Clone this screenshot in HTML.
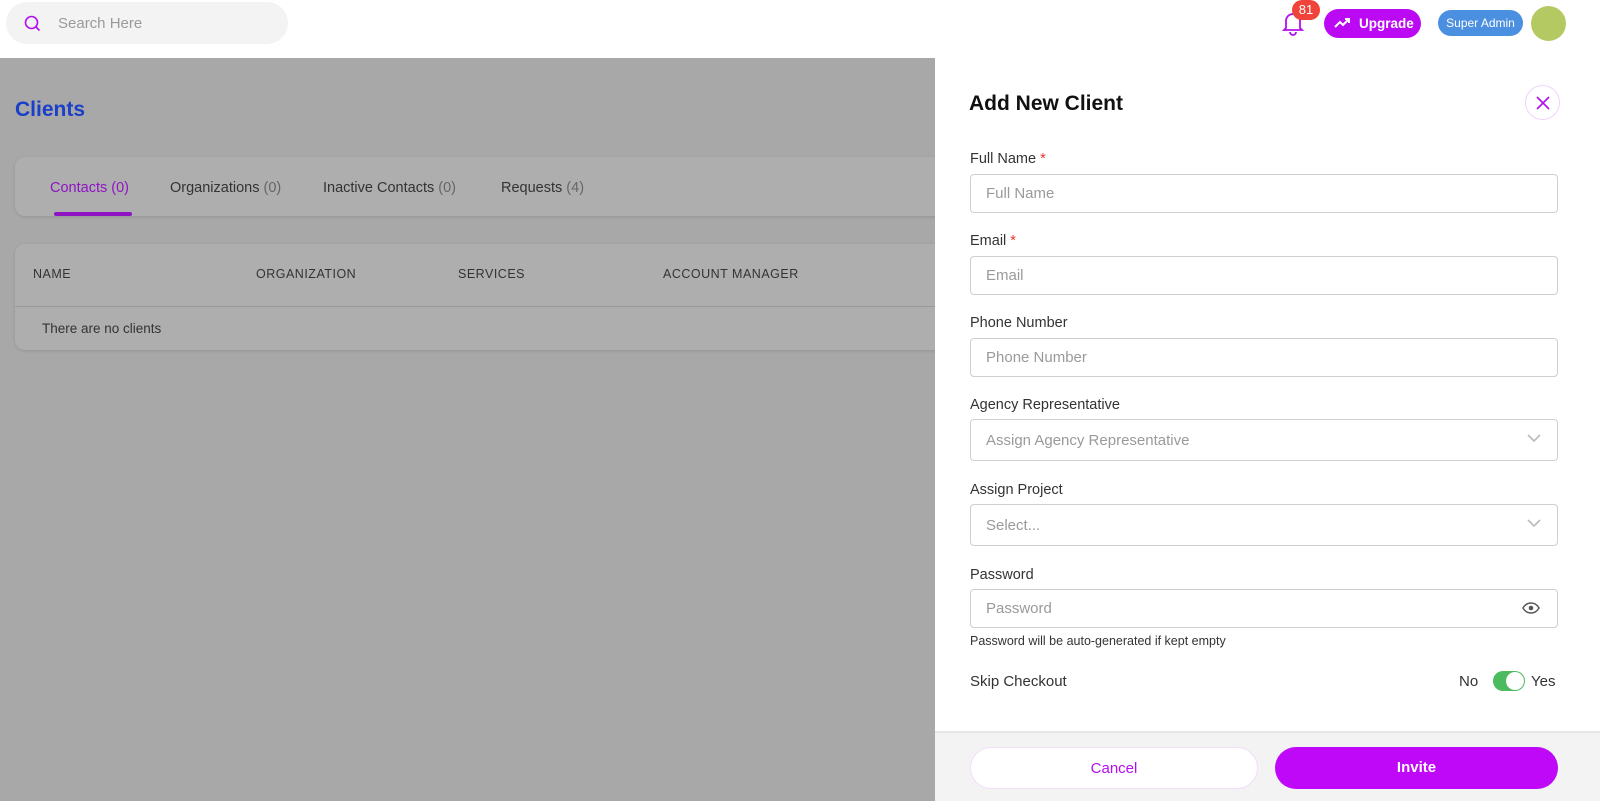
<!DOCTYPE html>
<html><head><meta charset="utf-8"><style>
*{box-sizing:border-box;margin:0;padding:0}
body{width:1600px;height:801px;overflow:hidden;font-family:"Liberation Sans",sans-serif;background:#a8a8a8;position:relative}
.hdr{position:absolute;left:0;top:0;width:1600px;height:58px;background:#fff}
.search{position:absolute;left:6px;top:2px;width:282px;height:42px;border-radius:21px;background:#f3f3f3}
.search span{position:absolute;left:52px;top:13px;font-size:15px;color:#9a9a9a}
.main{position:absolute;left:0;top:58px;width:935px;height:743px;background:#a8a8a8}
.title{position:absolute;left:15px;top:40px;font-size:21px;font-weight:bold;color:#1a3fc8}
.card{position:absolute;left:15px;background:#aeaeae;border-radius:10px;width:940px;box-shadow:0 1px 3px rgba(0,0,0,.12)}
.tab{position:absolute;top:23px;font-size:14.5px;color:#333}
.tab i{font-style:normal;color:#666}
.th{position:absolute;top:23px;font-size:12.5px;color:#333;letter-spacing:.5px}
.panel{position:absolute;left:935px;top:58px;width:665px;height:743px;background:#fff}
.panel h1{position:absolute;left:34px;top:34px;font-size:21px;font-weight:bold;color:#111}
.close{position:absolute;left:590px;top:27px;width:35px;height:35px;border-radius:50%;border:1px solid #f1d3fb}
.lbl{position:absolute;left:35px;font-size:14.5px;color:#333}
.lbl b{color:#e33;font-weight:normal}
.inp{position:absolute;left:35px;width:588px;height:39px;border:1px solid #cfcfcf;border-radius:4px;font-size:15px;color:#9a9a9a;padding:10px 15px}
.sel{height:42px;padding-top:12px}
.chev{position:absolute;right:16px;top:14px}
.foot{position:absolute;left:0;top:673px;width:665px;height:70px;background:#f3f3f3;border-top:2px solid #e6e6e6}
.btn{position:absolute;top:14px;height:42px;border-radius:21px;text-align:center;line-height:42px;font-size:15px}
</style></head><body>
<div class="hdr">
 <div class="search"><svg style="position:absolute;left:18px;top:13px" width="17" height="17" viewBox="0 0 17 17"><circle cx="7.5" cy="7.5" r="6" fill="none" stroke="#b40ef0" stroke-width="1.6"/><path d="M12 12l3.5 3.5" stroke="#b40ef0" stroke-width="1.6"/></svg><span>Search Here</span></div>
 <svg style="position:absolute;left:1281px;top:10px" width="24" height="26" viewBox="0 0 24 26"><path d="M5 18V11a7 7 0 0 1 14 0v7l2 2H3z" fill="none" stroke="#b40ef0" stroke-width="1.8"/><path d="M9 22a3 3 0 0 0 6 0" fill="none" stroke="#b40ef0" stroke-width="1.8"/></svg>
 <div style="position:absolute;left:1292px;top:0;width:28px;height:20px;border-radius:10px;background:#f0443a;color:#fff;font-size:13px;text-align:center;line-height:20px">81</div>
 <div style="position:absolute;left:1324px;top:9px;width:97px;height:29px;border-radius:15px;background:#bb0af3;color:#fff;font-size:13.5px;font-weight:bold;line-height:29px;padding-left:35px"><svg style="position:absolute;left:10px;top:8px" width="18" height="12" viewBox="0 0 18 12"><path d="M1 10l5-5 3 3 6-6M11 2h4v4" fill="none" stroke="#fff" stroke-width="2"/></svg>Upgrade</div>
 <div style="position:absolute;left:1438px;top:10px;width:85px;height:26px;border-radius:13px;background:#4a8fe0;color:#fff;font-size:12px;text-align:center;line-height:26px">Super Admin</div>
 <div style="position:absolute;left:1531px;top:6px;width:35px;height:35px;border-radius:50%;background:#b5c962"></div>
</div>
<div class="main">
 <div class="title">Clients</div>
 <div class="card" style="top:99px;height:59px">
  <div class="tab" style="left:35px;color:#8e14c4">Contacts (0)</div>
  <div style="position:absolute;left:39px;top:55px;width:78px;height:4px;background:#8e14c4;border-radius:2px"></div>
  <div class="tab" style="left:155px">Organizations <i>(0)</i></div>
  <div class="tab" style="left:308px">Inactive Contacts <i>(0)</i></div>
  <div class="tab" style="left:486px">Requests <i>(4)</i></div>
 </div>
 <div class="card" style="top:186px;height:106px">
  <div class="th" style="left:18px">NAME</div>
  <div class="th" style="left:241px">ORGANIZATION</div>
  <div class="th" style="left:443px">SERVICES</div>
  <div class="th" style="left:648px">ACCOUNT MANAGER</div>
  <div style="position:absolute;left:0;top:62px;width:100%;height:1px;background:#999"></div>
  <div style="position:absolute;left:27px;top:77px;font-size:13.5px;color:#333">There are no clients</div>
 </div>
</div>
<div class="panel">
 <h1>Add New Client</h1>
 <div class="close"><svg style="position:absolute;left:10px;top:10px" width="14" height="14" viewBox="0 0 14 14"><path d="M1 1l12 12M13 1L1 13" stroke="#b40ef0" stroke-width="1.6"/></svg></div>
 <div class="lbl" style="top:93px">Full Name <b>*</b></div>
 <div class="inp" style="top:116px">Full Name</div>
 <div class="lbl" style="top:175px">Email <b>*</b></div>
 <div class="inp" style="top:198px">Email</div>
 <div class="lbl" style="top:257px">Phone Number</div>
 <div class="inp" style="top:280px">Phone Number</div>
 <div class="lbl" style="top:339px">Agency Representative</div>
 <div class="inp sel" style="top:361px">Assign Agency Representative<svg class="chev" width="14" height="9" viewBox="0 0 14 9"><path d="M1 1l6 6 6-6" fill="none" stroke="#bbb" stroke-width="1.6"/></svg></div>
 <div class="lbl" style="top:424px">Assign Project</div>
 <div class="inp sel" style="top:446px">Select...<svg class="chev" width="14" height="9" viewBox="0 0 14 9"><path d="M1 1l6 6 6-6" fill="none" stroke="#bbb" stroke-width="1.6"/></svg></div>
 <div class="lbl" style="top:509px">Password</div>
 <div class="inp" style="top:531px">Password<svg style="position:absolute;right:17px;top:12px" width="18" height="12" viewBox="0 0 18 12"><path d="M1 6c2-3.5 5-5 8-5s6 1.5 8 5c-2 3.5-5 5-8 5S3 9.5 1 6z" fill="none" stroke="#555" stroke-width="1.4"/><circle cx="9" cy="6" r="2.3" fill="#555"/></svg></div>
 <div style="position:absolute;left:35px;top:576px;font-size:12.5px;color:#333">Password will be auto-generated if kept empty</div>
 <div class="lbl" style="top:615px;font-size:15px">Skip Checkout</div>
 <div style="position:absolute;left:524px;top:615px;font-size:15px;color:#333">No</div>
 <div style="position:absolute;left:558px;top:613px;width:32px;height:20px;border-radius:10px;background:#4cba5e"><div style="position:absolute;right:1px;top:1px;width:18px;height:18px;border-radius:50%;background:#fff"></div></div>
 <div style="position:absolute;left:596px;top:615px;font-size:15px;color:#333">Yes</div>
 <div class="foot">
  <div class="btn" style="left:35px;width:288px;background:#fff;border:1px solid #f4dcfb;color:#b40ef0">Cancel</div>
  <div class="btn" style="left:340px;width:283px;background:#bf08f7;color:#fff;font-weight:bold">Invite</div>
 </div>
</div>
</body></html>
